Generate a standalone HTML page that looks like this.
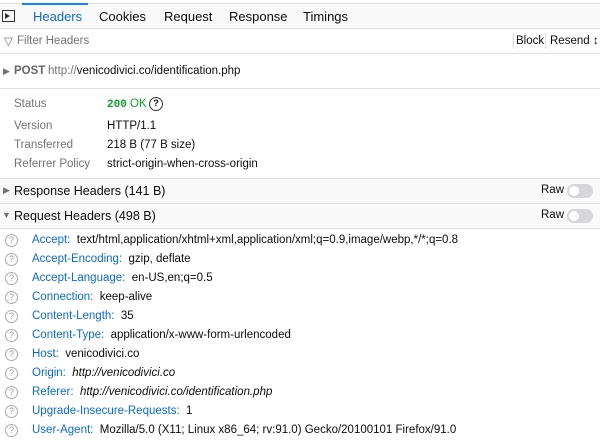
<!DOCTYPE html>
<html><head><style>
*{margin:0;padding:0;box-sizing:border-box}
body{width:600px;height:440px;overflow:hidden;background:#fff;font-family:"Liberation Sans",sans-serif;font-size:11.5px;color:#0c0c0d;position:relative}
.a{position:absolute;white-space:nowrap}
.g{color:#737373}
.b{color:#0a6bd6}
.q{position:absolute;left:5px;width:13px;height:13px;border:1px solid #aaa;border-radius:50%;color:#999;font-size:9px;text-align:center;line-height:11px}
.hr{position:absolute;left:0;width:600px;height:1px;background:#e0e0e2}
.tog{position:absolute;left:567px;width:26px;height:14px;border-radius:7px;background:#d7d7db}
.tog:before{content:"";position:absolute;left:2px;top:2px;width:10px;height:10px;border-radius:50%;background:#fff}
</style></head><body>
<div class="a" style="left:0;top:3px;width:600px;height:26px;background:#f9f9fa;border-top:1px solid #e0e0e2;border-bottom:1px solid #e0e0e2"></div>
<div class="a" style="left:22px;top:3px;width:66px;height:2px;background:#0a84ff"></div>
<div class="a" style="left:2px;top:10px;width:13px;height:12px;border:1px solid #333"></div>
<div class="a" style="left:5px;top:13px;width:0;height:0;border-left:5px solid #333;border-top:3px solid transparent;border-bottom:3px solid transparent"></div>
<div class="a" style="left:33px;top:9px;font-size:13px;color:#0a6bd6">Headers</div>
<div class="a" style="left:99px;top:9px;font-size:13px">Cookies</div>
<div class="a" style="left:164px;top:9px;font-size:13px">Request</div>
<div class="a" style="left:229px;top:9px;font-size:13px">Response</div>
<div class="a" style="left:303px;top:9px;font-size:13px">Timings</div>
<div class="a g" style="left:4px;top:34px">&#x25BD;</div>
<div class="a g" style="left:17px;top:35px">Filter Headers</div>
<div class="a" style="left:513px;top:33px;width:1px;height:16px;background:#ddd"></div>
<div class="a" style="left:516px;top:35px">Block</div>
<div class="a" style="left:545px;top:33px;width:1px;height:16px;background:#ddd"></div>
<div class="a" style="left:550px;top:35px">Resend &#x2195;</div>
<div class="hr" style="top:53px"></div>
<div class="a g" style="left:3px;top:66px;font-size:9px">&#x25B6;</div>
<div class="a" style="left:14px;top:65px;color:#666;font-weight:bold">POST</div>
<div class="a" style="left:48px;top:65px"><span class="g">http://</span>venicodivici.co/identification.php</div>
<div class="hr" style="top:88px"></div>
<div class="a g" style="left:14px;top:98px">Status</div>
<div class="a" style="left:107px;top:98px"><b style="font-family:'Liberation Mono',monospace;color:#12a12a;font-size:11px">200</b> <span style="color:#12a12a">OK</span></div>
<div class="a" style="left:149px;top:97px;width:14px;height:14px;border:1.5px solid #333;border-radius:50%;font-size:9px;text-align:center;line-height:11px;font-weight:bold">?</div>
<div class="a g" style="left:14px;top:120px">Version</div><div class="a" style="left:107px;top:120px">HTTP/1.1</div>
<div class="a g" style="left:14px;top:139px">Transferred</div><div class="a" style="left:107px;top:139px">218 B (77 B size)</div>
<div class="a g" style="left:14px;top:158px">Referrer Policy</div><div class="a" style="left:107px;top:158px">strict-origin-when-cross-origin</div>
<div class="a" style="left:0;top:178px;width:600px;height:50px;background:#f9f9fa"></div>
<div class="hr" style="top:178px"></div>
<div class="hr" style="top:203px"></div>
<div class="hr" style="top:228px"></div>
<div class="a g" style="left:3px;top:185px;font-size:9px">&#x25B6;</div>
<div class="a" style="left:14px;top:184px;font-size:12.5px">Response Headers (141 B)</div>
<div class="a" style="left:541px;top:184px">Raw</div><div class="tog" style="top:184px"></div>
<div class="a g" style="left:2px;top:210px;font-size:9px">&#x25BC;</div>
<div class="a" style="left:14px;top:209px;font-size:12.5px">Request Headers (498 B)</div>
<div class="a" style="left:541px;top:209px">Raw</div><div class="tog" style="top:209px"></div>

<div class="q" style="top:234px">?</div><div class="a" style="left:32px;top:234px"><span class="b">Accept:</span>&nbsp; text/html,application/xhtml+xml,application/xml;q=0.9,image/webp,*/*;q=0.8</div>
<div class="q" style="top:253px">?</div><div class="a" style="left:32px;top:253px"><span class="b">Accept-Encoding:</span>&nbsp; gzip, deflate</div>
<div class="q" style="top:272px">?</div><div class="a" style="left:32px;top:272px"><span class="b">Accept-Language:</span>&nbsp; en-US,en;q=0.5</div>
<div class="q" style="top:291px">?</div><div class="a" style="left:32px;top:291px"><span class="b">Connection:</span>&nbsp; keep-alive</div>
<div class="q" style="top:310px">?</div><div class="a" style="left:32px;top:310px"><span class="b">Content-Length:</span>&nbsp; 35</div>
<div class="q" style="top:329px">?</div><div class="a" style="left:32px;top:329px"><span class="b">Content-Type:</span>&nbsp; application/x-www-form-urlencoded</div>
<div class="q" style="top:348px">?</div><div class="a" style="left:32px;top:348px"><span class="b">Host:</span>&nbsp; venicodivici.co</div>
<div class="q" style="top:367px">?</div><div class="a" style="left:32px;top:367px"><span class="b">Origin:</span>&nbsp; <i>http://venicodivici.co</i></div>
<div class="q" style="top:386px">?</div><div class="a" style="left:32px;top:386px"><span class="b">Referer:</span>&nbsp; <i>http://venicodivici.co/identification.php</i></div>
<div class="q" style="top:405px">?</div><div class="a" style="left:32px;top:405px"><span class="b">Upgrade-Insecure-Requests:</span>&nbsp; 1</div>
<div class="q" style="top:424px">?</div><div class="a" style="left:32px;top:424px"><span class="b">User-Agent:</span>&nbsp; Mozilla/5.0 (X11; Linux x86_64; rv:91.0) Gecko/20100101 Firefox/91.0</div>
</body></html>
